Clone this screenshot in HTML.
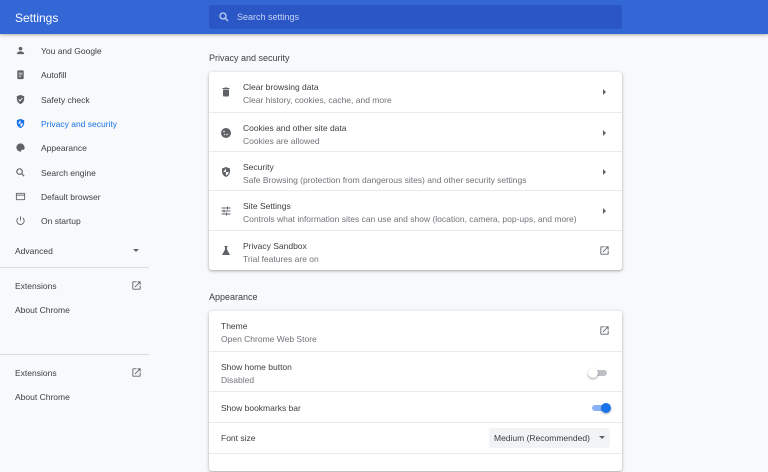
<html><head><style>
body{margin:0;width:768px;height:461px;overflow:hidden;background:#f8f9fa;font-family:"Liberation Sans",sans-serif;color:#202124;position:relative}
.hdr{position:absolute;left:0;top:0;width:768px;height:34px;background:#3367d6;box-shadow:0 1px 3px rgba(0,0,0,.3)}
.hdr .t{position:absolute;left:15px;top:11px;color:#fff;font-size:12px}
.srch{position:absolute;left:209px;top:5px;width:413px;height:24px;background:#2a56c6;border-radius:2px;color:#c6d3f5;font-size:9px}
.srch span{position:absolute;left:28px;top:7px}
.nav{position:absolute;left:0;font-size:8.5px;color:#3c4043}
.nav svg{position:absolute;left:15px;top:-1px}
.nav span{position:absolute;left:41px;white-space:nowrap}
.sep{position:absolute;left:0;width:149px;height:1px;background:#dadce0}
.plain{position:absolute;left:15px;font-size:8.5px;color:#3c4043}
.sec{position:absolute;left:209px;font-size:9px;color:#3c4043}
.card{position:absolute;left:209px;width:413px;background:#fff;border-radius:3px;box-shadow:0 1px 2px rgba(60,64,67,.3),0 1px 3px 1px rgba(60,64,67,.12)}
.row{position:absolute;left:0;width:413px;border-top:1px solid #e8eaed;font-size:8.5px}
.row:first-child{border-top:none}
.row .a{position:absolute;left:34px;top:10px;color:#3c4043}
.row .b{position:absolute;left:34px;top:23px;color:#6f7378}
.c2 .row .a,.c2 .row .b{left:12px}
.row svg{position:absolute}
.arr{position:absolute;right:16px;width:0;height:0;border-left:3px solid #5f6368;border-top:3px solid transparent;border-bottom:3px solid transparent}
</style></head><body>
<div class="hdr"><div class="t">Settings</div>
<div class="srch"><svg width="12" height="12" viewBox="0 0 24 24" style="position:absolute;left:9px;top:6px"><circle cx="10" cy="10" r="6" fill="none" stroke="#c6d3f5" stroke-width="2.5"/><path d="M14.5 14.5L20 20" stroke="#c6d3f5" stroke-width="2.5"/></svg><span>Search settings</span></div></div>

<div class="nav" style="top:46px"><svg width="11" height="11" viewBox="0 0 24 24"><circle cx="12" cy="8" r="4" fill="#5f6368"/><path d="M4 20c0-4 4-6 8-6s8 2 8 6z" fill="#5f6368"/></svg><span>You and Google</span></div>
<div class="nav" style="top:70px"><svg width="11" height="11" viewBox="0 0 24 24"><rect x="5" y="3" width="14" height="19" rx="2" fill="#5f6368"/><path d="M8 9h8M8 13h8M8 17h5" stroke="#fff" stroke-width="1.5"/></svg><span>Autofill</span></div>
<div class="nav" style="top:95px"><svg width="11" height="11" viewBox="0 0 24 24"><path d="M12 2l8 3v6c0 5-3.5 9.5-8 11-4.5-1.5-8-6-8-11V5z" fill="#5f6368"/><path d="M8 12l3 3 5-6" stroke="#fff" stroke-width="2" fill="none"/></svg><span>Safety check</span></div>
<div class="nav" style="top:119px;color:#1a73e8"><svg width="11" height="11" viewBox="0 0 24 24"><path d="M12 2l8 3v6c0 5-3.5 9.5-8 11-4.5-1.5-8-6-8-11V5z" fill="#1a73e8"/><path d="M12 5v7H6.5M12 12h5.5c-.5 3.5-2.5 6-5.5 7z" fill="#fff"/></svg><span>Privacy and security</span></div>
<div class="nav" style="top:143px"><svg width="11" height="11" viewBox="0 0 24 24"><path d="M12 3a9 9 0 000 18c1.5 0 2-1 1.5-2s0-2 1.5-2h2a4 4 0 004-4c0-5-4-10-9-10z" fill="#5f6368"/></svg><span>Appearance</span></div>
<div class="nav" style="top:168px"><svg width="11" height="11" viewBox="0 0 24 24"><circle cx="10" cy="10" r="6" fill="none" stroke="#5f6368" stroke-width="2.5"/><path d="M14.5 14.5L20 20" stroke="#5f6368" stroke-width="2.5"/></svg><span>Search engine</span></div>
<div class="nav" style="top:192px"><svg width="11" height="11" viewBox="0 0 24 24"><rect x="3" y="5" width="18" height="14" rx="1" fill="none" stroke="#5f6368" stroke-width="2"/><path d="M3 9h18" stroke="#5f6368" stroke-width="2"/></svg><span>Default browser</span></div>
<div class="nav" style="top:216px"><svg width="11" height="11" viewBox="0 0 24 24"><path d="M7 6.5a8 8 0 1010 0" fill="none" stroke="#5f6368" stroke-width="2"/><path d="M12 3v9" stroke="#5f6368" stroke-width="2"/></svg><span>On startup</span></div>
<div class="plain" style="top:246px">Advanced</div>
<div style="position:absolute;left:133px;top:249px;border-top:3px solid #5f6368;border-left:3px solid transparent;border-right:3px solid transparent"></div>
<div class="sep" style="top:267px"></div>
<div class="plain" style="top:281px">Extensions</div>
<svg width="11" height="11" viewBox="0 0 24 24" style="position:absolute;left:131px;top:280px"><path d="M19 19H5V5h7V3H5a2 2 0 00-2 2v14a2 2 0 002 2h14a2 2 0 002-2v-7h-2zM14 3v2h3.6l-9.8 9.8 1.4 1.4L19 6.4V10h2V3z" fill="#5f6368"/></svg>
<div class="plain" style="top:305px">About Chrome</div>
<div class="sep" style="top:354px"></div>
<div class="plain" style="top:368px">Extensions</div>
<svg width="11" height="11" viewBox="0 0 24 24" style="position:absolute;left:131px;top:367px"><path d="M19 19H5V5h7V3H5a2 2 0 00-2 2v14a2 2 0 002 2h14a2 2 0 002-2v-7h-2zM14 3v2h3.6l-9.8 9.8 1.4 1.4L19 6.4V10h2V3z" fill="#5f6368"/></svg>
<div class="plain" style="top:392px">About Chrome</div>

<div class="sec" style="top:53px">Privacy and security</div>
<div class="card" style="top:72px;height:198px">
<div class="row" style="top:0;height:40px"><svg width="12" height="12" viewBox="0 0 24 24" style="left:11px;top:14px"><path d="M6 19a2 2 0 002 2h8a2 2 0 002-2V7H6zM19 4h-3.5l-1-1h-5l-1 1H5v2h14z" fill="#5f6368"/></svg><div class="a">Clear browsing data</div><div class="b">Clear history, cookies, cache, and more</div><div class="arr" style="top:17px"></div></div>
<div class="row" style="top:40px;height:39px"><svg width="12" height="12" viewBox="0 0 24 24" style="left:11px;top:14px"><circle cx="12" cy="12" r="10" fill="#5f6368"/><circle cx="8" cy="9" r="1.5" fill="#fff"/><circle cx="14" cy="15" r="1.5" fill="#fff"/><circle cx="9" cy="15" r="1.2" fill="#fff"/></svg><div class="a">Cookies and other site data</div><div class="b">Cookies are allowed</div><div class="arr" style="top:17px"></div></div>
<div class="row" style="top:79px;height:39px"><svg width="12" height="12" viewBox="0 0 24 24" style="left:11px;top:14px"><path d="M12 2l8 3v6c0 5-3.5 9.5-8 11-4.5-1.5-8-6-8-11V5z" fill="#5f6368"/><path d="M12 5v7H6.5M12 12h5.5c-.5 3.5-2.5 6-5.5 7z" fill="#fff"/></svg><div class="a">Security</div><div class="b">Safe Browsing (protection from dangerous sites) and other security settings</div><div class="arr" style="top:17px"></div></div>
<div class="row" style="top:118px;height:40px"><svg width="12" height="12" viewBox="0 0 24 24" style="left:11px;top:14px"><path d="M3 6h18M3 12h18M3 18h18" stroke="#5f6368" stroke-width="2"/><path d="M15 3v6M8 9v6M13 15v6" stroke="#5f6368" stroke-width="2"/></svg><div class="a">Site Settings</div><div class="b">Controls what information sites can use and show (location, camera, pop-ups, and more)</div><div class="arr" style="top:17px"></div></div>
<div class="row" style="top:158px;height:40px"><svg width="12" height="12" viewBox="0 0 24 24" style="left:11px;top:14px"><path d="M9 2h6v2h-1v5l6 11H4l6-11V4H9z" fill="#5f6368"/></svg><div class="a">Privacy Sandbox</div><div class="b">Trial features are on</div><svg width="11" height="11" viewBox="0 0 24 24" style="right:12px;top:14px"><path d="M19 19H5V5h7V3H5a2 2 0 00-2 2v14a2 2 0 002 2h14a2 2 0 002-2v-7h-2zM14 3v2h3.6l-9.8 9.8 1.4 1.4L19 6.4V10h2V3z" fill="#5f6368"/></svg></div>
</div>

<div class="sec" style="top:292px">Appearance</div>
<div class="card c2" style="top:311px;height:160px">
<div class="row" style="top:0;height:40px"><div class="a">Theme</div><div class="b">Open Chrome Web Store</div><svg width="11" height="11" viewBox="0 0 24 24" style="right:12px;top:14px"><path d="M19 19H5V5h7V3H5a2 2 0 00-2 2v14a2 2 0 002 2h14a2 2 0 002-2v-7h-2zM14 3v2h3.6l-9.8 9.8 1.4 1.4L19 6.4V10h2V3z" fill="#5f6368"/></svg></div>
<div class="row" style="top:40px;height:40px"><div class="a">Show home button</div><div class="b">Disabled</div>
<div style="position:absolute;left:381px;top:18px;width:17px;height:6px;border-radius:3px;background:#bdc1c6"></div><div style="position:absolute;left:379px;top:16px;width:10px;height:10px;border-radius:50%;background:#fff;box-shadow:0 1px 2px rgba(0,0,0,.4)"></div></div>
<div class="row" style="top:80px;height:31px"><div class="a" style="top:11px">Show bookmarks bar</div>
<div style="position:absolute;left:383px;top:13px;width:17px;height:6px;border-radius:3px;background:#8ab4f8"></div><div style="position:absolute;left:392px;top:11px;width:10px;height:10px;border-radius:50%;background:#1a73e8;box-shadow:0 1px 2px rgba(0,0,0,.3)"></div></div>
<div class="row" style="top:111px;height:31px"><div class="a" style="top:10px">Font size</div>
<div style="position:absolute;left:280px;top:5px;width:121px;height:20px;background:#f1f3f4;border-radius:3px;font-size:8.5px"><span style="position:absolute;left:5px;top:5px;color:#3c4043">Medium (Recommended)</span><div style="position:absolute;right:5px;top:8px;border-top:3px solid #5f6368;border-left:3px solid transparent;border-right:3px solid transparent"></div></div></div>
<div class="row" style="top:142px;height:18px"></div>
</div>
</body></html>
